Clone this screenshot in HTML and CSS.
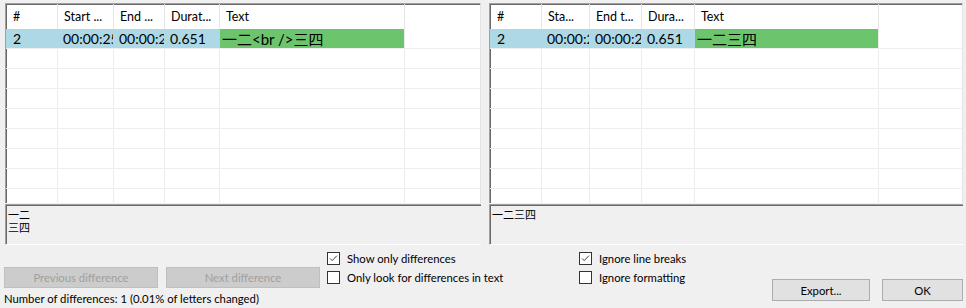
FILE: index.html
```html
<!DOCTYPE html>
<html>
<head>
<meta charset="utf-8">
<link rel="stylesheet" href="styles.css">
</head>
<body>
<div class="panes">
  <div class="pane pane-left">
    <div class="grid">
      <div class="row head">
        <div class="c c1">#</div><div class="c c2">Start ...</div><div class="c c3">End ...</div><div class="c c4">Durat...</div><div class="c c5">Text</div><div class="c fill"></div>
      </div>
      <div class="row sel">
        <div class="c c1">2</div><div class="c c2">00:00:25</div><div class="c c3">00:00:25</div><div class="c c4">0.651</div><div class="c c5 diff">一二&lt;br /&gt;三四</div><div class="c fill"></div>
      </div>
      <div class="row"><div class="c c1"></div><div class="c c2"></div><div class="c c3"></div><div class="c c4"></div><div class="c c5"></div><div class="c fill"></div></div>
      <div class="row"><div class="c c1"></div><div class="c c2"></div><div class="c c3"></div><div class="c c4"></div><div class="c c5"></div><div class="c fill"></div></div>
      <div class="row"><div class="c c1"></div><div class="c c2"></div><div class="c c3"></div><div class="c c4"></div><div class="c c5"></div><div class="c fill"></div></div>
      <div class="row"><div class="c c1"></div><div class="c c2"></div><div class="c c3"></div><div class="c c4"></div><div class="c c5"></div><div class="c fill"></div></div>
      <div class="row"><div class="c c1"></div><div class="c c2"></div><div class="c c3"></div><div class="c c4"></div><div class="c c5"></div><div class="c fill"></div></div>
      <div class="row"><div class="c c1"></div><div class="c c2"></div><div class="c c3"></div><div class="c c4"></div><div class="c c5"></div><div class="c fill"></div></div>
      <div class="row"><div class="c c1"></div><div class="c c2"></div><div class="c c3"></div><div class="c c4"></div><div class="c c5"></div><div class="c fill"></div></div>
      <div class="row"><div class="c c1"></div><div class="c c2"></div><div class="c c3"></div><div class="c c4"></div><div class="c c5"></div><div class="c fill"></div></div>
    </div>
    <div class="preview"><div>一二</div><div>三四</div></div>
  </div>
  <div class="pane pane-right">
    <div class="grid">
      <div class="row head">
        <div class="c c1">#</div><div class="c c2">Sta...</div><div class="c c3">End t...</div><div class="c c4">Dura...</div><div class="c c5">Text</div><div class="c fill"></div>
      </div>
      <div class="row sel">
        <div class="c c1">2</div><div class="c c2">00:00:25</div><div class="c c3">00:00:25</div><div class="c c4">0.651</div><div class="c c5 diff">一二三四</div><div class="c fill"></div>
      </div>
      <div class="row"><div class="c c1"></div><div class="c c2"></div><div class="c c3"></div><div class="c c4"></div><div class="c c5"></div><div class="c fill"></div></div>
      <div class="row"><div class="c c1"></div><div class="c c2"></div><div class="c c3"></div><div class="c c4"></div><div class="c c5"></div><div class="c fill"></div></div>
      <div class="row"><div class="c c1"></div><div class="c c2"></div><div class="c c3"></div><div class="c c4"></div><div class="c c5"></div><div class="c fill"></div></div>
      <div class="row"><div class="c c1"></div><div class="c c2"></div><div class="c c3"></div><div class="c c4"></div><div class="c c5"></div><div class="c fill"></div></div>
      <div class="row"><div class="c c1"></div><div class="c c2"></div><div class="c c3"></div><div class="c c4"></div><div class="c c5"></div><div class="c fill"></div></div>
      <div class="row"><div class="c c1"></div><div class="c c2"></div><div class="c c3"></div><div class="c c4"></div><div class="c c5"></div><div class="c fill"></div></div>
      <div class="row"><div class="c c1"></div><div class="c c2"></div><div class="c c3"></div><div class="c c4"></div><div class="c c5"></div><div class="c fill"></div></div>
      <div class="row"><div class="c c1"></div><div class="c c2"></div><div class="c c3"></div><div class="c c4"></div><div class="c c5"></div><div class="c fill"></div></div>
    </div>
    <div class="preview"><div>一二三四</div></div>
  </div>
</div>
<div class="bottom">
  <div class="nav">
    <div class="nav-buttons">
      <button class="btn disabled" disabled>Previous difference</button>
      <button class="btn disabled" disabled>Next difference</button>
    </div>
    <div class="status">Number of differences: 1 (0.01% of letters changed)</div>
  </div>
  <div class="checks checks1">
    <label class="chk"><span class="box"><svg viewBox="0 0 13 13" width="11" height="11"><path d="M2.5 6.5 L5 9 L10.5 3.2" fill="none" stroke="#333" stroke-width="1.1"/></svg></span>Show only differences</label>
    <label class="chk"><span class="box"></span>Only look for differences in text</label>
  </div>
  <div class="checks checks2">
    <label class="chk"><span class="box"><svg viewBox="0 0 13 13" width="11" height="11"><path d="M2.5 6.5 L5 9 L10.5 3.2" fill="none" stroke="#333" stroke-width="1.1"/></svg></span>Ignore line breaks</label>
    <label class="chk"><span class="box"></span>Ignore formatting</label>
  </div>
  <div class="actions">
    <button class="btn export">Export...</button>
    <button class="btn ok">OK</button>
  </div>
</div>
</body>
</html>
```

FILE: styles.css
```css
* { box-sizing: border-box; }
html, body { margin: 0; padding: 0; }
body {
  width: 966px;
  height: 308px;
  overflow: hidden;
  background: #f0f0f0;
  font-family: Lato, "Noto Sans CJK SC", sans-serif;
  font-size: 11.3px;
  color: #000;
}
.panes {
  display: flex;
  gap: 8px;
  padding: 3px 0 0 5px;
}
.pane { display: flex; flex-direction: column; }
.pane-left { width: 476px; }
.pane-right { width: 474px; }
.grid {
  height: 200px;
  background: #fff;
  border-top: 1px solid #a0a0a0;
  border-left: 1px solid #a0a0a0;
  border-right: 1px solid #e3e3e3;
  box-shadow: inset 1px 1px 0 #696969;
  overflow: hidden;
  font-size: 12.5px;
}
.row {
  display: flex;
  height: 20px;
  border-bottom: 1px solid #efefef;
}
.row.head {
  height: 25px;
  border-bottom: none;
}
.c {
  flex: none;
  height: 100%;
  padding-left: 6px;
  border-right: 1px solid #ececec;
  white-space: nowrap;
  overflow: hidden;
  text-overflow: clip;
  line-height: 20px;
}
.head .c { line-height: 25px; border-right-color: #e5e5e5; }
.c.c1 { padding-left: 7px; }
.pane-left .c1 { width: 52px; }
.pane-left .c2 { width: 56px; }
.pane-left .c3 { width: 51px; }
.pane-left .c4 { width: 55px; }
.pane-left .c5 { width: 185px; }
.pane-right .c1 { width: 52px; }
.pane-right .c2 { width: 48px; }
.pane-right .c3 { width: 52px; }
.pane-right .c4 { width: 53px; }
.pane-right .c5 { width: 184px; }
.c.fill { flex: 1; border-right: none; }
.sel .c1, .sel .c2, .sel .c3, .sel .c4 {
  background: #add8e6;
  border-right-color: #add8e6;
  padding-left: 5px;
  font-size: 14px;
}
.sel .c.c1 { padding-left: 7px; }
.sel .c.diff {
  background: #6cc56c;
  border-right-color: #ececec;
  padding-left: 2px;
  font-size: 15px;
}
.preview {
  margin-top: 1px;
  height: 41px;
  padding: 3px 0 0 2px;
  border-top: 1px solid #a0a0a0;
  border-left: 1px solid #a0a0a0;
  border-bottom: 1px solid #fff;
  box-shadow: inset 1px 1px 0 #696969;
  font-size: 11px;
  font-family: "Noto Sans CJK SC", sans-serif;
}
.preview div { height: 13px; line-height: 13px; }
.bottom {
  display: flex;
  align-items: flex-start;
  height: 63px;
}
.nav {
  margin-left: 4px;
  padding-top: 22px;
  width: 316px;
}
.nav-buttons { display: flex; gap: 8px; }
.btn {
  font-family: Lato, sans-serif;
  font-size: 11.3px;
  height: 21px;
  padding: 0;
  background: #e1e1e1;
  border: 1px solid #adadad;
  color: #000;
}
.btn.disabled {
  width: 154px;
  background: #cccccc;
  border-color: #bfbfbf;
  color: #a0a0a0;
}
.status {
  margin-top: 3px;
  line-height: 15px;
  white-space: nowrap;
}
.checks {
  padding-top: 7px;
  display: flex;
  flex-direction: column;
  gap: 6px;
}
.checks1 { margin-left: 7px; width: 252px; }
.chk {
  display: flex;
  align-items: center;
  gap: 7px;
  height: 13px;
  white-space: nowrap;
}
.box {
  width: 13px;
  height: 13px;
  border: 1px solid #333;
  background: #fff;
  display: flex;
  align-items: center;
  justify-content: center;
}
.actions {
  margin-left: auto;
  margin-right: 3px;
  padding-top: 34px;
  display: flex;
  gap: 12px;
}
.btn.export { width: 98px; height: 22px; }
.btn.ok { width: 81px; height: 22px; }
```
